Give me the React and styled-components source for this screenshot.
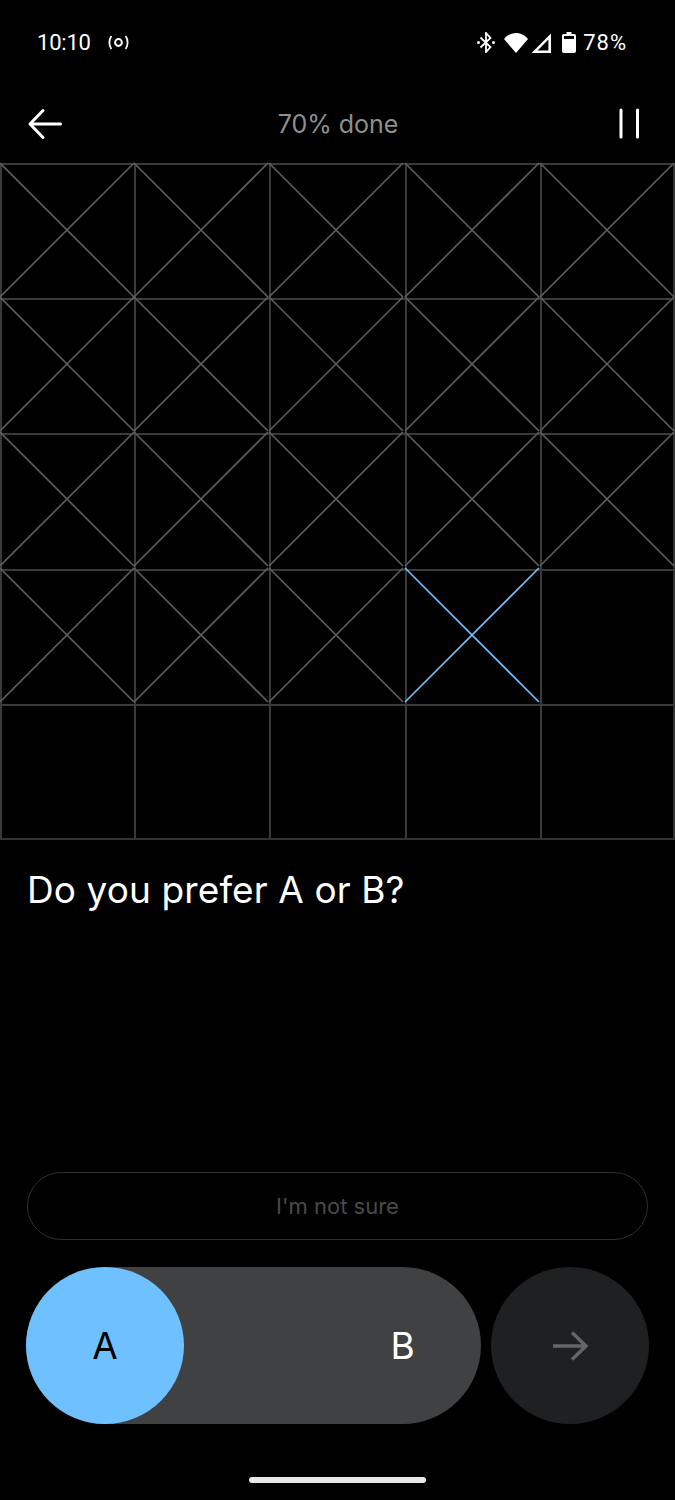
import React from "react";
import styled, { createGlobalStyle } from "styled-components";

const Global = createGlobalStyle`
  html, body { margin: 0; padding: 0; background: #000; }
  * { box-sizing: border-box; }
`;

const Screen = styled.div`
  width: 675px;
  height: 1500px;
  background: #000;
  display: flex;
  flex-direction: column;
  font-family: Inter, "Liberation Sans", sans-serif;
  color: #fff;
  overflow: hidden;
`;

const StatusBar = styled.div`
  height: 85px;
  padding: 0 48px 0 37px;
  display: flex;
  align-items: center;
  justify-content: space-between;
  font-family: Roboto, Inter, sans-serif;
  font-size: 22px;
  font-weight: 400;
`;

const StatusGroup = styled.div`
  display: flex;
  align-items: center;
`;

const StatusIcon = styled.svg`
  display: block;
  flex: none;
  margin-left: ${(p) => p.$left}px;
`;

const StatusText = styled.span`
  margin-left: ${(p) => p.$left || 0}px;
  letter-spacing: ${(p) => p.$spacing || 0}px;
`;

const Header = styled.div`
  height: 78px;
  padding: 0 26px 0 27px;
  display: flex;
  align-items: center;
  justify-content: space-between;
`;

const Progress = styled.div`
  font-size: 25px;
  color: #8f8f8f;
  font-weight: 400;
  letter-spacing: -0.05px;
`;

const IconButton = styled.div`
  width: 36px;
  height: 36px;
  display: flex;
  align-items: center;
  justify-content: center;
`;

const Grid = styled.div`
  width: 675px;
  display: grid;
  grid-template-columns: 134px 135px 136px 135px 133px;
  grid-template-rows: 135px 135px 136px 135px 134px;
  border-bottom: 2px solid #343434;
  border-right: 2px solid #343434;
`;

const Cell = styled.div`
  position: relative;
  border-top: 2px solid #3a3a3a;
  border-left: 2px solid #3a3a3a;
`;

const CrossMark = styled.svg`
  position: absolute;
  left: -3px;
  top: ${(p) => (p.$first ? -3 : -4)}px;
  width: 136px;
  height: 136px;
  overflow: visible;
`;

const Question = styled.div`
  flex: 1;
  padding: 28px 27px 0;
  font-size: 37px;
  line-height: 44px;
  font-weight: 400;
  letter-spacing: 0.1px;
`;

const Actions = styled.div`
  padding: 0 26px;
  display: flex;
  flex-direction: column;
  gap: 27px;
`;

const NotSure = styled.div`
  height: 68px;
  margin: 0 1px;
  border: 1.5px solid #2f2f2f;
  border-radius: 34px;
  display: flex;
  align-items: center;
  justify-content: center;
  font-size: 22px;
  color: #4a4a4a;
`;

const Row = styled.div`
  display: flex;
  gap: 10px;
`;

const Toggle = styled.div`
  width: 455px;
  height: 157px;
  border-radius: 79px;
  background: #404142;
  display: flex;
  align-items: center;
  justify-content: space-between;
`;

const Knob = styled.div`
  width: 158px;
  height: 157px;
  border-radius: 50%;
  background: #6fc0ff;
  color: #000;
  font-size: 37px;
  display: flex;
  align-items: center;
  justify-content: center;
`;

const Option = styled.div`
  width: 157px;
  font-size: 37px;
  text-align: center;
`;

const Next = styled.div`
  width: 158px;
  height: 157px;
  border-radius: 50%;
  background: #1f2021;
  display: flex;
  align-items: center;
  justify-content: center;
`;

const HomeArea = styled.div`
  height: 76px;
  display: flex;
  justify-content: center;
  padding-top: 53px;
`;

const HomeBar = styled.div`
  width: 177px;
  height: 6px;
  border-radius: 3px;
  background: #e8e8e8;
`;

const Cross = ({ color, first }) => (
  <CrossMark $first={first} viewBox="0 0 136 136">
    <path d="M1 1 L135 135 M135 1 L1 135" stroke={color} strokeWidth="1.6" fill="none" />
  </CrossMark>
);

const cells = Array.from({ length: 25 }, (_, i) => i);

export default function App() {
  return (
    <Screen>
      <Global />
      <StatusBar>
        <StatusGroup>
          <StatusText $spacing={-0.2}>10:10</StatusText>
          <StatusIcon $left={17} width="21" height="15" viewBox="0 0 21 15" fill="none" stroke="#fff" strokeWidth="1.8">
            <circle cx="10.5" cy="7.5" r="3.4" strokeWidth="2" />
            <path d="M3.4 1 C0.7 4.8 0.7 10.2 3.4 14" />
            <path d="M17.6 1 C20.3 4.8 20.3 10.2 17.6 14" />
          </StatusIcon>
        </StatusGroup>
        <StatusGroup>
          <StatusIcon $left={0} width="18" height="21" viewBox="0 0 18 21" fill="none" stroke="#fff" strokeWidth="1.8">
            <path d="M3.5 5.5 L13.5 15 L9 20 V1 L13.5 6 L3.5 15.5" />
            <circle cx="1.5" cy="10.5" r="1.5" fill="#fff" stroke="none" />
            <circle cx="16.5" cy="10.5" r="1.5" fill="#fff" stroke="none" />
          </StatusIcon>
          <StatusIcon $left={9} width="24" height="20" viewBox="0 0 24 20">
            <path d="M12 20 L0 6 C3 2.5 7.2 0 12 0 C16.8 0 21 2.5 24 6 Z" fill="#fff" />
          </StatusIcon>
          <StatusIcon $left={3} width="20" height="20" viewBox="0 0 20 20">
            <path d="M20 0.5 V20 H0.5 Z M17.4 6.6 L6.6 17.4 H17.4 Z" fill="#fff" fillRule="evenodd" />
          </StatusIcon>
          <StatusIcon $left={11} width="14" height="21" viewBox="0 0 14 21">
            <path d="M4.5 0 H9.5 V2 H12.2 A1.8 1.8 0 0 1 14 3.8 V19.2 A1.8 1.8 0 0 1 12.2 21 H1.8 A1.8 1.8 0 0 1 0 19.2 V3.8 A1.8 1.8 0 0 1 1.8 2 H4.5 Z" fill="#fff" />
            <path d="M2 4 H12 V7 H2 Z" fill="#000" />
          </StatusIcon>
          <StatusText $left={7} $spacing={1}>78%</StatusText>
        </StatusGroup>
      </StatusBar>
      <Header>
        <IconButton>
          <svg width="36" height="32" viewBox="0 0 36 32" fill="none" stroke="#fff" strokeWidth="3" strokeLinecap="round" strokeLinejoin="round">
            <path d="M33.5 16 H3 M16 2.5 L3 16 L16 29.5" />
          </svg>
        </IconButton>
        <Progress>70% done</Progress>
        <IconButton>
          <svg width="24" height="32" viewBox="0 0 24 32" fill="none" stroke="#fff" strokeWidth="3" strokeLinecap="round">
            <path d="M2 2 V29 M18.5 2 V29" />
          </svg>
        </IconButton>
      </Header>
      <Grid>
        {cells.map((i) => (
          <Cell key={i}>
            {i < 18 && <Cross color="#5e5e5e" first={i < 5} />}
            {i === 18 && <Cross color="#6fc0ff" />}
          </Cell>
        ))}
      </Grid>
      <Question>Do you prefer A or B?</Question>
      <Actions>
        <NotSure>I'm not sure</NotSure>
        <Row>
          <Toggle>
            <Knob>A</Knob>
            <Option>B</Option>
          </Toggle>
          <Next>
            <svg width="38" height="32" viewBox="0 0 38 32" fill="none" stroke="#666" strokeWidth="3.4">
              <path d="M2 16 H35 M21 2.5 L35 16 L21 29.5" />
            </svg>
          </Next>
        </Row>
      </Actions>
      <HomeArea>
        <HomeBar />
      </HomeArea>
    </Screen>
  );
}
